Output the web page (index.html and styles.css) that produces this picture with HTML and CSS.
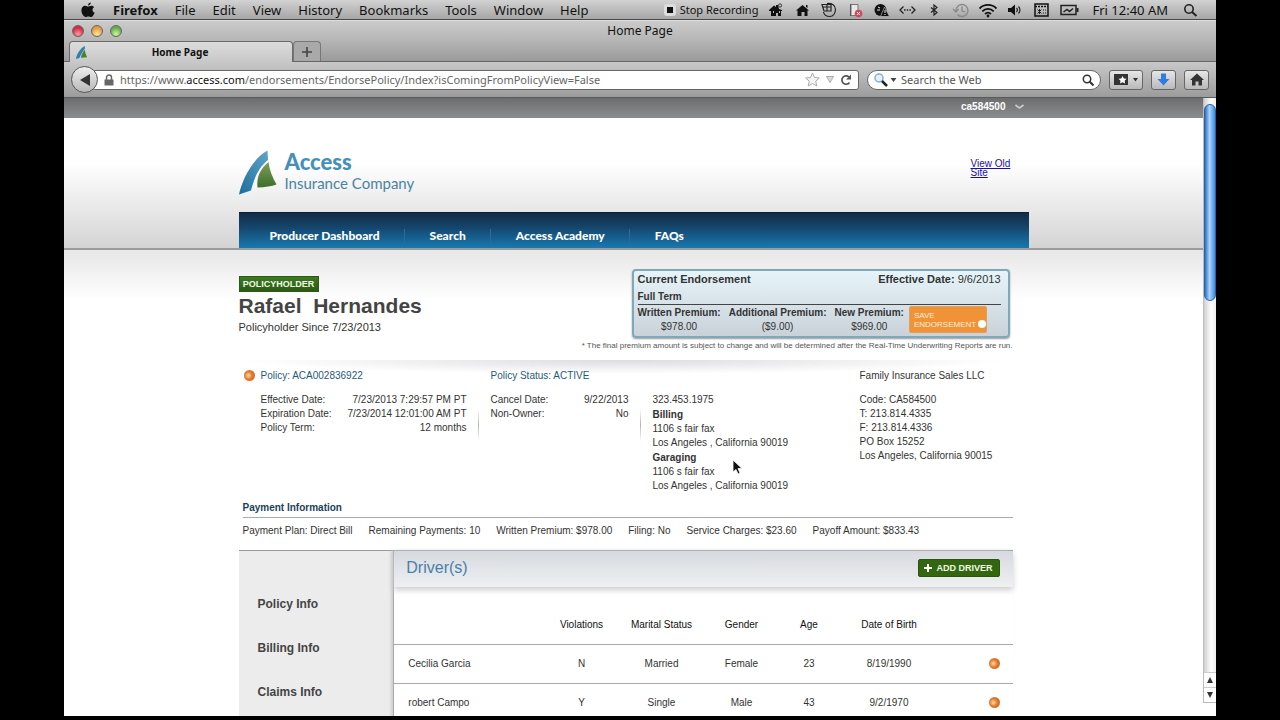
FILE: index.html
```html
<!DOCTYPE html>
<html lang="en">
<head>
  <meta charset="UTF-8">
  <meta name="viewport" content="width=device-width, initial-scale=1.0">
  <title>Home Page</title>
  <link rel="stylesheet" href="styles.css">
</head>
<body>
  <div class="screen">

    <!-- system menu bar -->
    <div class="menubar">
      <svg class="apple" width="14" height="16" viewBox="0 0 14 16"><path d="M9.8 0.5c.1 1.500-1.300 3-2.800 3C6.900 2 8.300.700 9.800.5zM7.200 4.600c.8 0 1.600-.8 3-.8 1.300 0 2.300.6 2.900 1.400-2.300 1.400-2 4.500.5 5.500-.7 1.900-2 4.300-3.500 4.300-1 0-1.500-.6-2.700-.6s-1.700.6-2.700.6C2.600 15 .4 11.500.4 8.300c0-2.900 1.800-4.500 3.700-4.500 1.300 0 2.200.8 3.100.8z" fill="#111"/></svg>
      <nav class="menus">
        <strong>Firefox</strong>
        <span>File</span>
        <span>Edit</span>
        <span>View</span>
        <span>History</span>
        <span>Bookmarks</span>
        <span>Tools</span>
        <span>Window</span>
        <span>Help</span>
      </nav>
      <div class="status">
        <span class="recording"><i class="rec-dot"></i>Stop Recording</span>
        <svg width="18" height="16" viewBox="0 0 18 16"><path d="M2 8l5-4.500 2 1.500V3h2l1 4 3 1v1h-1v5h-3v-3H9v3H4V9H2z" fill="#111"/><circle cx="13" cy="3.500" r="1.600" fill="none" stroke="#333"/><path d="M6 9h1v2H6zM12 9h1v2h-1z" fill="#bbb"/></svg>
        <svg width="17" height="16" viewBox="0 0 17 16"><path d="M8.500 3l6.500 5.500h-1.500V14h-3v-4h-3v4h-4V8.500H2zM12 3h1.500v3L12 5z" fill="#111"/></svg>
        <svg width="17" height="16" viewBox="0 0 17 16"><path d="M7 1.500c5-.5 8.500 2 8.500 6S13 14.500 10 14.500c-4 0-6-2-6.500-4.500M2 2.500h9v6.500H4zM2 5h9M7 2.500V9" fill="none" stroke="#222" stroke-width="1.200"/></svg>
        <svg width="18" height="16" viewBox="0 0 18 16"><path d="M5 2.500h7v11H5z" fill="#e8e8e8" stroke="#777"/><path d="M4.500 2v12" stroke="#555"/><circle cx="12.500" cy="11.500" r="3.800" fill="#d0485a"/><path d="M11 10l3 3m0-3l-3 3" stroke="#fff"/></svg>
        <svg width="17" height="16" viewBox="0 0 17 16"><circle cx="7.500" cy="8" r="6" fill="#111"/><path d="M11.500 5l5 9.500h-9z" fill="#111" stroke="#bbb" stroke-width=".7"/><path d="M12 8v3m0 1v1M5 5l2 1M4 8h3" stroke="#eee"/></svg>
        <svg width="17" height="16" viewBox="0 0 17 16"><path d="M4.500 4.500L1 8l3.500 3.500M12.500 4.500L16 8l-3.500 3.500" fill="none" stroke="#222" stroke-width="1.300"/><path d="M5 8h7" stroke="#222" stroke-width="1.500" stroke-dasharray="1.500 1.200"/></svg>
        <svg width="18" height="16" viewBox="0 0 18 16"><path d="M6 5.500l6 5-3 2.500V3l3 2.500-6 5" fill="none" stroke="#222" stroke-width="1.200"/></svg>
        <svg width="18" height="16" viewBox="0 0 18 16"><path d="M4 9a6 6 0 1 1 1.500 3.500M1 7l3 3 2.500-3M10 4.500V9l3 1" fill="none" stroke="#888" stroke-width="1.300"/></svg>
        <svg width="18" height="16" viewBox="0 0 18 16"><path d="M0.500 6.500a12 12 0 0 1 17 0M3.300 9.300a8 8 0 0 1 11.400 0M6 12a4.500 4.500 0 0 1 6 0" fill="none" stroke="#111" stroke-width="1.800"/><circle cx="9" cy="14" r="1.400" fill="#111"/></svg>
        <svg width="17" height="16" viewBox="0 0 17 16"><path d="M2 6h3l4-3.500v11L5 10H2z" fill="#111"/><path d="M10.500 6a3 3 0 0 1 0 4M12.500 4.500a5 5 0 0 1 0 7" fill="none" stroke="#222" stroke-width="1.200"/></svg>
        <svg width="19" height="16" viewBox="0 0 19 16"><path d="M3 2h13v12H3z" fill="none" stroke="#111" stroke-width="1.500"/><path d="M3 4.500h13" stroke="#111" stroke-width="1.500" stroke-dasharray="2 1"/><path d="M5.500 7.500l4 4m0-4l-4 4M7.500 7v5M11 8h1m1 0h1m-3 3h1m1 0h1" stroke="#222"/></svg>
        <svg width="20" height="16" viewBox="0 0 20 16"><path d="M1 3.500h15v9H1z" fill="none" stroke="#222" stroke-width="1.500"/><path d="M17.500 6v4" stroke="#222" stroke-width="2"/><path d="M3.500 10L7 7.500l2.500 2L13 6.500" fill="none" stroke="#222" stroke-width="1.500"/></svg>
        <span class="clock">Fri 12:40 AM</span>
        <svg width="15" height="16" viewBox="0 0 15 16"><circle cx="6" cy="7" r="4.200" fill="none" stroke="#222" stroke-width="1.600"/><path d="M9 10l4.500 4" stroke="#222" stroke-width="2"/></svg>
      </div>
    </div>

    <!-- browser window -->
    <div class="titlebar">
      <div class="lights"><i class="light red"></i><i class="light amber"></i><i class="light green"></i></div>
      <div class="window-title">Home Page</div>
    </div>
    <div class="tabstrip">
      <div class="tab">
        <svg width="13" height="13" viewBox="0 0 38 44"><path d="M0 44C3 28 14 8 31 0l-1 10C22 18 16 30 12 41z" fill="#2f7fb0"/><path d="M30 13c1 9 4 16 8 25l-21 2c1-9 6-20 13-27z" fill="#47832f"/></svg>
        <span>Home Page</span>
      </div>
      <button class="new-tab" aria-label="New tab"><svg width="10" height="10" viewBox="0 0 10 10"><path d="M5 0v10M0 5h10" stroke="#444" stroke-width="1.600"/></svg></button>
    </div>
    <div class="toolbar">
      <button class="back" aria-label="Back"><svg width="12" height="12" viewBox="0 0 12 12"><path d="M1 6l10-6v12z" fill="#333"/></svg></button>
      <div class="urlbar">
        <svg width="10" height="12" viewBox="0 0 10 12"><path d="M2.500 6V3.500a2.500 2.500 0 0 1 5 0V6" fill="none" stroke="#666" stroke-width="1.500"/><path d="M0.500 5.500h9v6h-9z" fill="#666"/></svg>
        <span class="url">https://www.<b>access.com</b>/endorsements/EndorsePolicy/Index?isComingFromPolicyView=False</span>
        <svg width="15" height="15" viewBox="0 0 15 15"><path d="M7.500 1l2 4.500 4.800.5-3.600 3.200 1.100 4.800-4.300-2.500L3.200 14l1.100-4.800L.7 6l4.800-.5z" fill="#f4f4f4" stroke="#aaa"/></svg>
        <svg width="8" height="7" viewBox="0 0 8 7"><path d="M.5.5h7L4 6.500z" fill="#ddd" stroke="#aaa"/></svg>
        <svg width="12" height="12" viewBox="0 0 12 12"><path d="M9.500 8.500A4.200 4.200 0 1 1 9 3" fill="none" stroke="#555" stroke-width="1.700"/><path d="M11 .5v5H6z" fill="#555"/></svg>
      </div>
      <div class="searchbox">
        <svg width="23" height="14" viewBox="0 0 23 14"><circle cx="5" cy="5" r="4" fill="#e4f0fa" stroke="#86aed2" stroke-width="1.500"/><path d="M8 8l5 5" stroke="#222" stroke-width="2.500"/><path d="M16.500 5h6l-3 4z" fill="#444"/></svg>
        <input type="text" placeholder="Search the Web" aria-label="Search the Web">
        <svg width="12" height="12" viewBox="0 0 12 12"><circle cx="5" cy="5" r="3.700" fill="none" stroke="#333" stroke-width="1.500"/><path d="M7.500 7.500l4 4" stroke="#333" stroke-width="2"/></svg>
      </div>
      <button class="tool wide" aria-label="Bookmarks"><svg width="25" height="13" viewBox="0 0 25 13"><path d="M0 1h14v11H0z" fill="#333"/><path d="M8.500 3l1.300 2.500 2.800.3-2 2 .5 2.800-2.600-1.400L6 10.600l.5-2.800-2-2 2.800-.3z" fill="#fff"/><path d="M19 5h5l-2.500 3.500z" fill="#333"/></svg></button>
      <button class="tool" aria-label="Downloads"><svg width="13" height="13" viewBox="0 0 13 13"><path d="M4 .5h5V6h3.500l-6 6.500L.5 6H4z" fill="#2f7de0"/></svg></button>
      <button class="tool" aria-label="Home"><svg width="14" height="13" viewBox="0 0 14 13"><path d="M7 .5L14 7h-2v5.500H8.500V8.500h-3v4H2V7H0z" fill="#333"/></svg></button>
    </div>

    <div class="viewport">
      <div class="page">
        <div class="userbar">
          <div class="container">
            <span>ca584500</span>
            <svg width="9" height="6" viewBox="0 0 9 6"><path d="M.5 1l4 3 4-3" fill="none" stroke="#ccc" stroke-width="1.600"/></svg>
          </div>
        </div>

        <header class="site-header">
          <div class="container">
            <div class="brand-row">
              <a class="brand" href="#">
                <svg width="38" height="45" viewBox="0 0 38 45">
                  <defs>
                    <linearGradient id="blade" x1="0" y1="1" x2="1" y2="0"><stop offset="0" stop-color="#1d6c9c"/><stop offset="1" stop-color="#5fa5cb"/></linearGradient>
                    <linearGradient id="leaf" x1="0" y1="0" x2="0" y2="1"><stop offset="0" stop-color="#7f9e5a"/><stop offset="1" stop-color="#3d6f2c"/></linearGradient>
                  </defs>
                  <path d="M0 44.500C3 30 14 8 28.500.5L29 10C20 17 15 28 12 40.500z" fill="url(#blade)"/>
                  <path d="M29.500 12c1 8 4 16 8 22.500Q30 37 18.500 37.500C17.500 27 21 19 29.500 12z" fill="url(#leaf)"/>
                </svg>
                <span class="brand-text"><b>Access</b><span>Insurance Company</span></span>
              </a>
              <a class="old-site" href="#">View Old Site</a>
            </div>
            <nav class="mainnav">
              <a href="#">Producer Dashboard</a>
              <a href="#">Search</a>
              <a href="#">Access Academy</a>
              <a href="#">FAQs</a>
            </nav>
          </div>
        </header>

        <main class="main">
          <div class="container content">
            <section class="summary">
              <div class="holder">
                <span class="badge">POLICYHOLDER</span>
                <h1>Rafael&nbsp; Hernandes</h1>
                <p>Policyholder Since 7/23/2013</p>
              </div>
              <div class="endorse-wrap">
                <div class="endorse">
                  <div class="endorse-head"><b>Current Endorsement</b><span><b>Effective Date:</b> 9/6/2013</span></div>
                  <div class="endorse-term">Full Term</div>
                  <div class="endorse-row">
                    <div><b>Written Premium:</b><span>$978.00</span></div>
                    <div><b>Additional Premium:</b><span>($9.00)</span></div>
                    <div><b>New Premium:</b><span>$969.00</span></div>
                    <button class="save">SAVE<br>ENDORSEMENT <i></i></button>
                  </div>
                </div>
                <p class="note">* The final premium amount is subject to change and will be determined after the Real-Time Underwriting Reports are run.</p>
              </div>
            </section>

            <section class="policy">
              <div class="policy-title linked"><i class="go"></i>Policy: ACA002836922</div>
              <div class="policy-title linked">Policy Status: ACTIVE</div>
              <div class="policy-title"></div>
              <div class="policy-title">Family Insurance Sales LLC</div>

              <dl class="facts">
                <div><dt>Effective Date:</dt><dd>7/23/2013 7:29:57 PM PT</dd></div>
                <div><dt>Expiration Date:</dt><dd>7/23/2014 12:01:00 AM PT</dd></div>
                <div><dt>Policy Term:</dt><dd>12 months</dd></div>
              </dl>
              <dl class="facts">
                <div><dt>Cancel Date:</dt><dd>9/22/2013</dd></div>
                <div><dt>Non-Owner:</dt><dd>No</dd></div>
              </dl>
              <div class="address">
                <p>323.453.1975</p>
                <h2>Billing</h2>
                <p>1106 s fair fax</p>
                <p>Los Angeles , California 90019</p>
                <h2>Garaging</h2>
                <p>1106 s fair fax</p>
                <p>Los Angeles , California 90019</p>
                <svg class="cursor" width="11" height="16" viewBox="0 0 11 16"><path d="M1 1v12l3-2.500L6 15l2-1-2-4.500h4z" fill="#111" stroke="#fff" stroke-width=".8"/></svg>
              </div>
              <div class="address">
                <p>Code: CA584500</p>
                <p>T: 213.814.4335</p>
                <p>F: 213.814.4336</p>
                <p>PO Box 15252</p>
                <p>Los Angeles, California 90015</p>
              </div>
            </section>

            <section class="payment">
              <h2>Payment Information</h2>
              <ul>
                <li>Payment Plan: Direct Bill</li>
                <li>Remaining Payments: 10</li>
                <li>Written Premium: $978.00</li>
                <li>Filing: No</li>
                <li>Service Charges: $23.60</li>
                <li>Payoff Amount: $833.43</li>
              </ul>
            </section>

            <section class="details">
              <nav class="sidenav">
                <a href="#">Policy Info</a>
                <a href="#">Billing Info</a>
                <a href="#">Claims Info</a>
              </nav>
              <div class="drivers">
                <div class="drivers-head">
                  <h2>Driver(s)</h2>
                  <button class="add"><svg width="8" height="8" viewBox="0 0 8 8"><path d="M4 0v8M0 4h8" stroke="#fff" stroke-width="2"/></svg>ADD DRIVER</button>
                </div>
                <table>
                  <colgroup><col><col class="c-mid"><col class="c-mid"><col class="c-mid"><col class="c-age"><col class="c-dob"><col class="c-go"></colgroup>
                  <thead>
                    <tr><th></th><th>Violations</th><th>Marital Status</th><th>Gender</th><th>Age</th><th>Date of Birth</th><th></th></tr>
                  </thead>
                  <tbody>
                    <tr><td>Cecilia Garcia</td><td>N</td><td>Married</td><td>Female</td><td>23</td><td>8/19/1990</td><td><i class="go"></i></td></tr>
                    <tr><td>robert Campo</td><td>Y</td><td>Single</td><td>Male</td><td>43</td><td>9/2/1970</td><td><i class="go"></i></td></tr>
                  </tbody>
                </table>
              </div>
            </section>
          </div>
        </main>
      </div>

      <div class="scrollbar">
        <div class="track"><div class="thumb"></div></div>
        <div class="arrow"><svg width="6" height="6" viewBox="0 0 6 6"><path d="M3 0l3 6H0z" fill="#333"/></svg></div>
        <div class="arrow"><svg width="6" height="6" viewBox="0 0 6 6"><path d="M0 0h6L3 6z" fill="#333"/></svg></div>
      </div>
    </div>
  </div>
</body>
</html>
```
FILE: styles.css
```css
* {
  box-sizing: border-box;
}
body {
  margin: 0;
  background: #000;
  font-family: "Liberation Sans", Arial, sans-serif;
  font-size: 10px;
  line-height: 14px;
  color: #333;
}
h1, h2, p, ul, dl, dd {
  margin: 0;
  padding: 0;
}
button {
  font-family: inherit;
  padding: 0;
  cursor: pointer;
}
svg {
  display: block;
  flex: none;
}
.screen {
  margin: 0 5%;
  height: calc(100vh - 4px);
  display: flex;
  flex-direction: column;
  overflow: hidden;
  background: #fff;
}

/* menu bar */
.menubar {
  flex: none;
  height: 20px;
  display: flex;
  align-items: center;
  padding: 0 18px 0 17px;
  background: linear-gradient(#d2d2d2, #a6a6a6);
  border-bottom: 1px solid #4a4a4a;
  font-family: "Noto Sans", sans-serif;
  font-size: 13px;
  color: #111;
  white-space: nowrap;
}
.menus {
  display: flex;
  gap: 17px;
  margin-left: 18px;
}
.status {
  display: flex;
  align-items: center;
  gap: 9px;
  margin-left: auto;
}
.recording {
  display: flex;
  align-items: center;
  gap: 4px;
  font-size: 11px;
}
.rec-dot {
  width: 12px;
  height: 12px;
  border: 3px solid #ddd;
  border-radius: 3px;
  background: #111;
}
.clock {
  margin: 0 6px 0 3px;
}

/* window chrome */
.titlebar {
  flex: none;
  height: 21px;
  display: flex;
  align-items: center;
  padding: 0 8px;
  background: linear-gradient(#cbcbcb, #b5b5b5);
  border-top: 1px solid #ddd;
  font-family: "Noto Sans", sans-serif;
  font-size: 12px;
  color: #111;
}
.titlebar::after {
  content: "";
  flex: 1;
}
.lights {
  flex: 1;
  display: flex;
  gap: 7px;
}
.light {
  width: 12px;
  height: 12px;
  border: 1px solid #666;
  border-radius: 50%;
}
.red {
  background: radial-gradient(circle at 50% 80%, #ff9aa8, #d22c44 65%);
}
.amber {
  background: radial-gradient(circle at 50% 80%, #ffe9a0, #e39a3c 65%);
}
.green {
  background: radial-gradient(circle at 50% 80%, #d2f5a8, #66ad4a 65%);
}
.tabstrip {
  flex: none;
  height: 21px;
  display: flex;
  padding-left: 5px;
  background: linear-gradient(#b5b5b5, #9a9a9a);
  border-bottom: 1px solid #666;
}
.tab {
  width: 224px;
  height: 21px;
  display: flex;
  align-items: center;
  padding: 0 20px 0 5px;
  background: linear-gradient(#dcdcdc, #c8c8c8);
  border: 1px solid #6a6a6a;
  border-bottom: 0;
  border-radius: 4px 4px 0 0;
  font-family: "Noto Sans", sans-serif;
  font-size: 10px;
  font-weight: bold;
  color: #111;
}
.tab span {
  flex: 1;
  text-align: center;
}
.new-tab {
  width: 28px;
  height: 20px;
  display: flex;
  align-items: center;
  justify-content: center;
  background: #a9a9a9;
  border: 1px solid #777;
  border-bottom: 0;
  border-radius: 4px 4px 0 0;
}
.toolbar {
  flex: none;
  height: 36px;
  display: flex;
  align-items: center;
  padding: 0 7px;
  gap: 8px;
  background: linear-gradient(#c8c8c8, #9c9c9c);
  border-bottom: 1px solid #5a5a5a;
  font-family: "Noto Sans", sans-serif;
  font-size: 12px;
}
.back {
  flex: none;
  position: relative;
  width: 27px;
  height: 27px;
  display: flex;
  align-items: center;
  justify-content: center;
  margin-right: -14px;
  background: linear-gradient(#eee, #b8b8b8);
  border: 1px solid #555;
  border-radius: 50%;
}
.urlbar {
  flex: 1;
  min-width: 0;
  height: 20px;
  display: flex;
  align-items: center;
  gap: 6px;
  padding: 0 6px 0 11px;
  background: #fff;
  border: 1px solid #666;
  border-radius: 3px;
}
.url {
  flex: 1;
  overflow: hidden;
  color: #666;
  font-size: 11px;
  white-space: nowrap;
}
.url b {
  font-weight: normal;
  color: #111;
}
.searchbox {
  width: 234px;
  height: 20px;
  display: flex;
  align-items: center;
  gap: 4px;
  padding: 0 6px;
  background: #fff;
  border: 1px solid #666;
  border-radius: 10px;
}
.searchbox input {
  flex: 1;
  min-width: 0;
  padding: 0;
  border: 0;
  outline: 0;
  background: none;
  font: inherit;
  font-size: 11px;
}
.searchbox input::placeholder {
  color: #555;
}
.tool {
  flex: none;
  width: 25px;
  height: 20px;
  display: flex;
  align-items: center;
  justify-content: center;
  background: linear-gradient(#e6e6e6, #b9b9b9);
  border: 1px solid #666;
  border-radius: 3px;
}
.tool.wide {
  width: 34px;
}

/* page area */
.viewport {
  flex: 1;
  min-height: 0;
  display: flex;
}
.page {
  flex: 1;
  min-width: 0;
  overflow: hidden;
}
.container {
  max-width: 790px;
  margin: 0 auto;
}
.userbar {
  height: 20px;
  background: linear-gradient(#6c6d6e, #8c8d8e);
}
.userbar .container {
  display: flex;
  align-items: center;
  justify-content: flex-end;
  gap: 9px;
  height: 18px;
  padding-right: 5px;
  color: #fff;
  font-weight: bold;
}
.site-header {
  background: linear-gradient(#fff 35%, #d4d4d4);
  border-bottom: 2px solid #9b9b9b;
}
.brand-row {
  display: flex;
  justify-content: space-between;
  align-items: flex-start;
  height: 94px;
  padding: 32px 17px 0 0;
}
.brand {
  display: flex;
  gap: 8px;
  text-decoration: none;
}
.brand-text {
  font-family: Lato, sans-serif;
  font-size: 15px;
  line-height: 18px;
  color: #4a84a0;
}
.brand-text span {
  display: block;
}
.brand-text b {
  display: block;
  font-size: 22px;
  line-height: 24px;
  font-weight: 900;
  color: #4590b8;
}
.old-site {
  width: 41px;
  margin-top: 9px;
  line-height: 9px;
  color: #1a0dab;
}
.mainnav {
  display: flex;
  align-items: flex-end;
  height: 36px;
  padding: 0 6px 5px;
  background: linear-gradient(#122c48, #15456b 40%, #1879b0);
  border-top: 1px solid #0d2033;
}
.mainnav a {
  padding: 0 24px 0 25px;
  border-right: 1px solid #2b6c97;
  font-family: Lato, sans-serif;
  font-size: 12px;
  font-weight: 900;
  color: #fff;
  text-decoration: none;
}
.mainnav a:last-child {
  border-right: 0;
}
.main {
  background: linear-gradient(#e6e6e6, #fff 50px);
}
.content {
  padding-right: 16px;
}

/* policyholder + endorsement */
.summary {
  display: flex;
  justify-content: space-between;
  height: 110px;
  padding-top: 19px;
}
.holder {
  padding-top: 7px;
}
.badge {
  display: block;
  width: 80px;
  height: 16px;
  background: linear-gradient(#3d7a22, #2a5a12);
  border: 1px solid #2c5a14;
  font-size: 9px;
  font-weight: bold;
  text-align: center;
  color: #f2f7ea;
}
.holder h1 {
  font-size: 21px;
  line-height: 28px;
  color: #444;
}
.holder p {
  font-size: 11px;
  line-height: 14px;
}
.endorse {
  width: 378px;
  height: 69px;
  margin: 0 3px 0 auto;
  padding: 1px 7px 0 4px;
  background: linear-gradient(#e6f4fa, #c9d2d8);
  border: 2px solid #7fa9b8;
  border-radius: 4px;
  box-shadow: 0 1px 2px #999;
}
.endorse-head {
  display: flex;
  justify-content: space-between;
  font-size: 11px;
}
.endorse-term {
  padding-top: 4px;
  font-weight: bold;
  border-bottom: 1px solid #444;
}
.endorse-row {
  display: flex;
  gap: 8px;
  padding-top: 1px;
  text-align: center;
}
.endorse-row span {
  display: block;
}
.save {
  width: 78px;
  height: 27px;
  margin-left: -3px;
  padding: 0 4px;
  background: #f09236;
  border: 1px solid #e0a060;
  border-radius: 2px;
  font-size: 8px;
  line-height: 9px;
  text-align: left;
  white-space: nowrap;
  color: #fdeedb;
}
.save i {
  display: inline-block;
  width: 8px;
  height: 8px;
  border-radius: 50%;
  background: #fff;
  vertical-align: top;
}
.note {
  font-size: 8px;
  line-height: 16px;
  text-align: right;
  color: #555;
}

/* policy facts */
.policy {
  display: grid;
  grid-template-columns: 230px 162px 207px 1fr;
  grid-template-rows: 24px 1fr;
  height: 140px;
  padding: 9px 0 0 22px;
  background: radial-gradient(ellipse at 50% 0, #dcdcdf, #fff 70%) no-repeat 0 0 / 100% 14px;
}
.policy-title {
  position: relative;
}
.policy-title.linked {
  color: #1f5a7d;
}
.policy-title .go {
  position: absolute;
  top: 1px;
  left: -17px;
}
.go {
  display: inline-block;
  width: 11px;
  height: 11px;
  border-radius: 50%;
  background: radial-gradient(circle at 40% 50%, #ffc48c 10%, #e07a2c 45%, #b8632a);
}
.facts {
  padding-right: 24px;
  background: linear-gradient(#fff, #b5b5b5, #fff) no-repeat right 12px top 16px / 1px 32px;
}
.facts div {
  display: flex;
  justify-content: space-between;
}
.address {
  position: relative;
}
.address h2 {
  font-size: 10px;
  line-height: 15px;
}
.cursor {
  position: absolute;
  top: 66px;
  left: 79px;
}

/* payment */
.payment h2 {
  margin-left: 4px;
  line-height: 16px;
  padding-bottom: 1px;
  font-size: 10px;
  color: #1c3f5c;
  border-bottom: 1px solid #aaa;
}
.payment ul {
  display: flex;
  gap: 16px;
  height: 32px;
  padding: 6px 0 0 4px;
  list-style: none;
}

/* details */
.details {
  display: flex;
  border-top: 1px solid #999;
}
.sidenav {
  width: 20%;
  display: flex;
  flex-direction: column;
  padding: 31px 0 40px 19px;
  background: #ececec;
}
.sidenav a {
  line-height: 44px;
  font-size: 12px;
  font-weight: bold;
  color: #444;
  text-decoration: none;
}
.drivers {
  flex: 1;
  border-left: 1px solid #aaa;
  box-shadow: -2px 0 3px #ccc;
  background: #fff;
}
.drivers-head {
  display: flex;
  align-items: center;
  justify-content: space-between;
  height: 36px;
  padding: 0 13px 2px 12px;
  background: linear-gradient(#d6d9df, #eef0f2);
  box-shadow: 0 3px 6px #ccc;
}
.drivers-head h2 {
  font-size: 16px;
  font-weight: normal;
  color: #4a7fa8;
}
.add {
  display: flex;
  align-items: center;
  justify-content: center;
  gap: 4px;
  width: 82px;
  height: 18px;
  background: #33670f;
  border: 1px solid #2b560d;
  border-radius: 2px;
  font-size: 9px;
  font-weight: bold;
  color: #f2f7ea;
}
table {
  width: 100%;
  table-layout: fixed;
  border-collapse: collapse;
}
.c-mid {
  width: 80px;
}
.c-age {
  width: 55px;
}
.c-dob {
  width: 105px;
}
.c-go {
  width: 71px;
}
th, td {
  height: 39px;
  padding: 0;
  text-align: center;
  border-bottom: 1px solid #aaa;
}
th {
  height: 57px;
  padding-top: 20px;
  font-weight: normal;
  color: #111;
}
td:first-child {
  padding-left: 14px;
  text-align: left;
}
td:last-child {
  padding-right: 13px;
  text-align: right;
}
td .go {
  vertical-align: middle;
}

/* scrollbar */
.scrollbar {
  flex: none;
  width: 13px;
  display: flex;
  flex-direction: column;
  margin-bottom: 13px;
  border: 1px solid #bbb;
  border-width: 0 0 1px 1px;
}
.track {
  flex: 1;
  padding: 6px 0;
  background: linear-gradient(90deg, #d0d0d0, #fff 60%, #eee);
}
.thumb {
  height: 35%;
  border: 1px solid #2a5fae;
  border-radius: 6px;
  background: linear-gradient(90deg, #2f6fc4, #a9d4fb 45%, #3f8ae0);
}
.arrow {
  height: 15px;
  display: flex;
  align-items: center;
  justify-content: center;
  border-top: 1px solid #ccc;
}
```
